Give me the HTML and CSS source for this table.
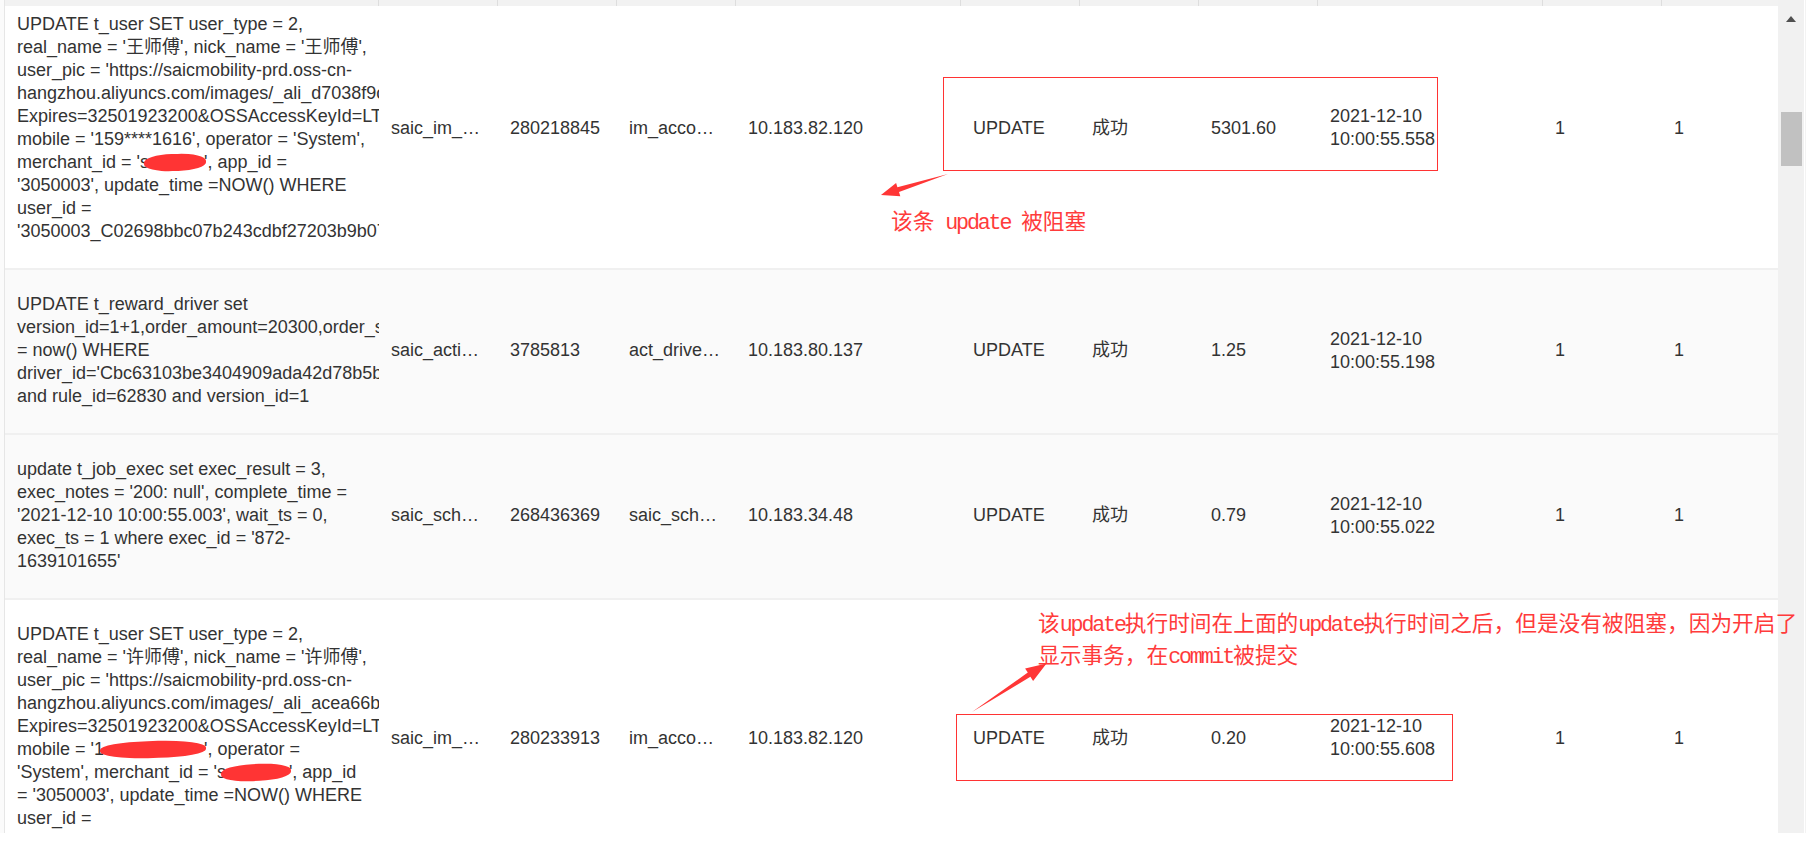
FILE: index.html
```html
<!DOCTYPE html>
<html lang="zh-CN">
<head>
<meta charset="utf-8">
<title>SQL 日志</title>
<link rel="stylesheet" href="styles.css">
</head>
<body>
<div class="screen">
  <div class="frame">
    <div class="gutter"></div>
    <div class="table-area">
      <table class="log">
        <colgroup>
          <col class="c-sql"><col class="c-s"><col class="c-s"><col class="c-s"><col class="c-l">
          <col class="c-s"><col class="c-s"><col class="c-s"><col class="c-l"><col class="c-s"><col class="c-s">
        </colgroup>
        <thead>
          <tr><th></th><th></th><th></th><th></th><th></th><th></th><th></th><th></th><th></th><th></th><th></th></tr>
        </thead>
        <tbody>
          <tr class="first">
            <td class="sql">
              <div>UPDATE t_user SET user_type = 2,</div>
              <div>real_name = '王师傅', nick_name = '王师傅',</div>
              <div>user_pic = 'https://saicmobility-prd.oss-cn-</div>
              <div>hangzhou.aliyuncs.com/images/_ali_d7038f9c8e21a4b.jpg?</div>
              <div>Expires=32501923200&amp;OSSAccessKeyId=LTAI4G8xyz',</div>
              <div>mobile = '159****1616', operator = 'System',</div>
              <div>merchant_id = 's<span class="redact r1"></span>', app_id =</div>
              <div>'3050003', update_time =NOW() WHERE</div>
              <div>user_id =</div>
              <div>'3050003_C02698bbc07b243cdbf27203b9b07a1'</div>
            </td>
            <td>saic_im_…</td>
            <td>280218845</td>
            <td>im_acco…</td>
            <td>10.183.82.120</td>
            <td>UPDATE</td>
            <td>成功</td>
            <td>5301.60</td>
            <td><div>2021-12-10</div><div>10:00:55.558</div></td>
            <td>1</td>
            <td>1</td>
          </tr>
          <tr class="alt">
            <td class="sql">
              <div>UPDATE t_reward_driver set</div>
              <div>version_id=1+1,order_amount=20300,order_status</div>
              <div>= now() WHERE</div>
              <div>driver_id='Cbc63103be3404909ada42d78b5b1c2'</div>
              <div>and rule_id=62830 and version_id=1</div>
            </td>
            <td>saic_acti…</td>
            <td>3785813</td>
            <td>act_drive…</td>
            <td>10.183.80.137</td>
            <td>UPDATE</td>
            <td>成功</td>
            <td>1.25</td>
            <td><div>2021-12-10</div><div>10:00:55.198</div></td>
            <td>1</td>
            <td>1</td>
          </tr>
          <tr class="alt">
            <td class="sql">
              <div>update t_job_exec set exec_result = 3,</div>
              <div>exec_notes = '200: null', complete_time =</div>
              <div>'2021-12-10 10:00:55.003', wait_ts = 0,</div>
              <div>exec_ts = 1 where exec_id = '872-</div>
              <div>1639101655'</div>
            </td>
            <td>saic_sch…</td>
            <td>268436369</td>
            <td>saic_sch…</td>
            <td>10.183.34.48</td>
            <td>UPDATE</td>
            <td>成功</td>
            <td>0.79</td>
            <td><div>2021-12-10</div><div>10:00:55.022</div></td>
            <td>1</td>
            <td>1</td>
          </tr>
          <tr>
            <td class="sql">
              <div>UPDATE t_user SET user_type = 2,</div>
              <div>real_name = '许师傅', nick_name = '许师傅',</div>
              <div>user_pic = 'https://saicmobility-prd.oss-cn-</div>
              <div>hangzhou.aliyuncs.com/images/_ali_acea66b3f01c.jpg?</div>
              <div>Expires=32501923200&amp;OSSAccessKeyId=LTAI4G8xyz',</div>
              <div>mobile = '1<span class="redact r2"></span>', operator =</div>
              <div>'System', merchant_id = 's<span class="redact r3"></span>', app_id</div>
              <div>= '3050003', update_time =NOW() WHERE</div>
              <div>user_id =</div>
              <div>'3050003_C0a1b2c3d4e5f6a7b8c9d0e1f2a3b4'</div>
            </td>
            <td>saic_im_…</td>
            <td>280233913</td>
            <td>im_acco…</td>
            <td>10.183.82.120</td>
            <td>UPDATE</td>
            <td>成功</td>
            <td>0.20</td>
            <td><div>2021-12-10</div><div>10:00:55.608</div></td>
            <td>1</td>
            <td>1</td>
          </tr>
        </tbody>
      </table>
    </div>
    <div class="scrollbar">
      <div class="sb-arrow"></div>
      <div class="sb-thumb"></div>
    </div>
    <div class="edge"></div>
  </div>

  <div class="mark box1"></div>
  <div class="mark box2"></div>
  <div class="note note1">该条<span class="lat"> update </span>被阻塞</div>
  <div class="note note2">该<span class="lat">update</span>执行时间在上面的<span class="lat">update</span>执行时间之后，但是没有被阻塞，因为开启了<br>显示事务，在<span class="lat">commit</span>被提交</div>
  <svg class="arrows" width="1819" height="849" viewBox="0 0 1819 849">
    <polygon points="881,195 896.1,182.9 897.4,187.2 948,174 899,192 900.3,196.3" fill="#ff3636"/>
    <polygon points="1046.5,663.5 1025.1,668.4 1027.8,672.6 972,712 1030.4,676.8 1033.1,681" fill="#ff3636"/>
  </svg>
</div>
</body>
</html>
```

FILE: styles.css
```css
html, body {
  margin: 0;
  padding: 0;
  background: #ffffff;
}

body {
  font-family: "Liberation Sans", "Noto Sans CJK SC", Arial, sans-serif;
  color: #333333;
}

.screen {
  position: relative;
  width: 1819px;
  height: 849px;
  overflow: hidden;
  background: #ffffff;
}

.frame {
  display: flex;
  height: 833px;
}

.gutter {
  width: 4px;
  flex: none;
  background: #fbfbfb;
  border-right: 1px solid #e6e6e6;
}

.table-area {
  width: 1773px;
  flex: none;
  overflow: hidden;
  background: #ffffff;
}

.log {
  table-layout: fixed;
  border-collapse: separate;
  border-spacing: 0;
  width: 1773px;
}

.c-sql { width: 374px; }
.c-s { width: 119px; }
.c-l { width: 225px; }

.log th {
  height: 6px;
  padding: 0;
  background: #f2f2f2;
  border-right: 1px solid #dedede;
}

.log td {
  padding: 23px 12px 25px;
  font-size: 18px;
  line-height: 23px;
  color: #333333;
  vertical-align: middle;
  white-space: nowrap;
  overflow: hidden;
  border-bottom: 2px solid #f0f0f0;
  background: #ffffff;
}

.log tr.first td {
  padding-top: 7px;
}

.log tr.alt td {
  background: #fafafa;
}

.redact {
  display: inline-block;
  height: 17px;
  vertical-align: -3px;
  background: #ff3434;
  border-radius: 45%;
}

.r1 { width: 62px; margin-left: -5px; margin-right: -2px; transform: rotate(-2deg); }
.r2 { width: 106px; margin-left: -4px; margin-right: -2px; transform: rotate(-1.5deg); }
.r3 { width: 70px; margin-left: -5px; margin-right: -2px; transform: rotate(-3deg); }

.scrollbar {
  width: 26px;
  flex: none;
  background: #f1f1f1;
  display: flex;
  flex-direction: column;
  align-items: center;
}

.sb-arrow {
  margin-top: 16px;
  width: 0;
  height: 0;
  border-left: 5.5px solid transparent;
  border-right: 5.5px solid transparent;
  border-bottom: 6px solid #505050;
}

.sb-thumb {
  margin-top: 90px;
  width: 21px;
  height: 54px;
  background: #c1c1c1;
}

.edge {
  flex: 1;
  background: #ffffff;
  border-left: 1px solid #f3f3f3;
  margin-left: 1px;
}

.mark {
  position: absolute;
  border: 1px solid #ff3333;
  box-sizing: border-box;
}

.box1 { left: 943px; top: 77px; width: 495px; height: 94px; }
.box2 { left: 956px; top: 714px; width: 497px; height: 67px; }

.note {
  position: absolute;
  font-family: "Noto Sans CJK SC", sans-serif;
  font-size: 21.7px;
  line-height: 28px;
  color: #ff3b3b;
  white-space: nowrap;
}

.note .lat {
  font-family: "Liberation Mono", monospace;
  letter-spacing: -0.1em;
}

.note1 { left: 891px; top: 206px; }
.note2 { left: 1038px; top: 608px; }

.arrows {
  position: absolute;
  left: 0;
  top: 0;
  pointer-events: none;
}
```
